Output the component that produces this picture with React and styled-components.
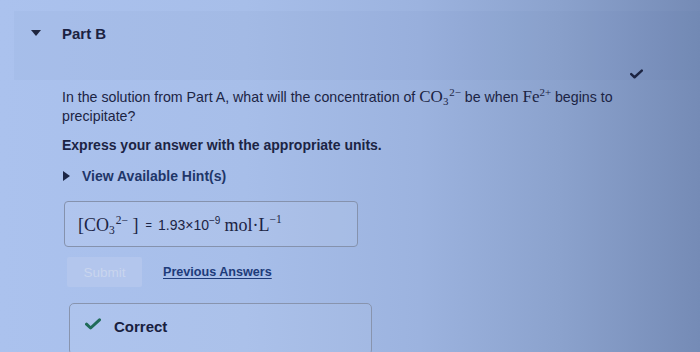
import React from 'react'
import styled, { createGlobalStyle } from 'styled-components'

const GlobalStyle = createGlobalStyle`
  html, body {
    margin: 0;
    padding: 0;
  }
  body {
    width: 700px;
    height: 352px;
    overflow: hidden;
    font-family: "Liberation Sans", Arial, sans-serif;
    color: #1c2444;
    background: linear-gradient(90deg, #abc2ee 0%, #a7bee9 35%, #9cb3df 60%, #8ba2cd 80%, #758bb6 100%);
  }
`

const Page = styled.div`
  position: relative;
  height: 352px;
  padding-left: 14px;
  box-sizing: border-box;
`

const Header = styled.div`
  margin-top: 11px;
  height: 69px;
  display: flex;
  align-items: flex-start;
  background: rgba(70, 95, 140, 0.035);
`

const Caret = styled.span`
  width: 0;
  height: 0;
  margin: 19px 0 0 17px;
  border-left: 5px solid transparent;
  border-right: 5px solid transparent;
  border-top: 6px solid #20273f;
`

const PartTitle = styled.h2`
  margin: 13px 0 0 21px;
  font-size: 15px;
  line-height: 20px;
  font-weight: bold;
  color: #1b2242;
`

const HeaderCheck = styled.svg`
  margin-left: auto;
  margin-right: 57px;
  align-self: flex-end;
  margin-bottom: 1px;
`

const Body = styled.div`
  padding-left: 48px;
  display: flex;
  flex-direction: column;
  align-items: flex-start;
`

const Question = styled.p`
  margin: 7px 0 0;
  width: 570px;
  font-size: 14.2px;
  line-height: 19px;
`

const Math = styled.span`
  font-family: "Liberation Serif", "Times New Roman", serif;
  font-size: ${p => p.size || 16}px;
`

const Sup = styled.sup`
  font-size: ${p => p.scale || 0.64}em;
  vertical-align: ${p => p.up || 0.55}em;
  line-height: 0;
  margin-left: ${p => p.gap || 0}px;
`

const Sub = styled.sub`
  font-size: 0.64em;
  vertical-align: -0.3em;
  line-height: 0;
`

const Instruction = styled.p`
  margin: 10px 0 0;
  font-size: 14px;
  line-height: 19px;
  font-weight: bold;
`

const HintRow = styled.div`
  margin-top: 11px;
  display: flex;
  align-items: center;
  gap: 12px;
  height: 19px;
`

const HintArrow = styled.span`
  width: 0;
  height: 0;
  margin-left: 1px;
  border-top: 5px solid transparent;
  border-bottom: 5px solid transparent;
  border-left: 7px solid #1c2646;
`

const HintLink = styled.span`
  font-size: 14px;
  font-weight: bold;
  color: #1f3669;
`

const AnswerBox = styled.div`
  margin: 16px 0 0 2px;
  width: 294px;
  height: 46px;
  box-sizing: border-box;
  border: 1px solid #8592ad;
  border-radius: 4px;
  background: rgba(255, 255, 255, 0.07);
  display: flex;
  align-items: center;
  padding: 2px 0 0 13px;
  white-space: nowrap;
`

const Equals = styled.span`
  font-size: 11px;
  margin: 0 6px 0 7px;
`

const Value = styled.span`
  font-size: 14px;
  margin-right: 4px;
`

const Actions = styled.div`
  margin: 10px 0 0 5px;
  display: flex;
  align-items: center;
  gap: 21px;
`

const SubmitButton = styled.button`
  width: 75px;
  height: 30px;
  border: none;
  border-radius: 2px;
  background: #b3c6ed;
  color: #c9d5ee;
  font-family: "Liberation Sans", Arial, sans-serif;
  font-size: 13.5px;
  padding: 0;
`

const PrevLink = styled.a`
  margin-top: 0;
  font-size: 12.6px;
  font-weight: bold;
  color: #1d3b7a;
  text-decoration: underline;
  text-underline-offset: 2px;
`

const Feedback = styled.div`
  margin: 16px 0 0 7px;
  width: 303px;
  height: 52px;
  box-sizing: border-box;
  border: 1px solid #8894ae;
  border-radius: 5px;
  background: rgba(255, 255, 255, 0.05);
  display: flex;
  align-items: flex-start;
  padding: 14px 0 0 15px;
  gap: 13px;
`

const FeedbackText = styled.span`
  font-size: 15px;
  font-weight: bold;
  line-height: 18px;
  color: #18203e;
`

const ScreenEdge = styled.div`
  position: absolute;
  left: 0;
  right: 0;
  bottom: 0;
  height: 4px;
  background: linear-gradient(90deg, #e4ebf8, #c9d4ea 70%, #b3c0da);
`

const Check = ({ color, w, h }) => (
  <svg width={w} height={h} viewBox="0 0 16 12">
    <path d="M1.5 6.2 L5.6 10 L14.5 1.8" fill="none" stroke={color} strokeWidth="3" strokeLinecap="round" strokeLinejoin="round" />
  </svg>
)

export default function App() {
  return (
    <>
      <GlobalStyle />
      <Page>
        <Header>
          <Caret />
          <PartTitle>Part B</PartTitle>
          <HeaderCheck width="13" height="10" viewBox="0 0 16 12">
            <path d="M1.5 6.2 L5.6 10 L14.5 1.8" fill="none" stroke="#1c2442" strokeWidth="3" strokeLinecap="round" strokeLinejoin="round" />
          </HeaderCheck>
        </Header>
        <Body>
          <Question>
            In the solution from Part A, what will the concentration of{' '}
            <Math size={17}>CO<Sub>3</Sub><Sup gap={1}>2−</Sup></Math>{'  '}be when{' '}
            <Math size={17}>Fe<Sup>2+</Sup></Math> begins to precipitate?
          </Question>
          <Instruction>Express your answer with the appropriate units.</Instruction>
          <HintRow>
            <HintArrow />
            <HintLink>View Available Hint(s)</HintLink>
          </HintRow>
          <AnswerBox>
            <Math size={18}>[CO<Sub>3</Sub><Sup gap={1}>2−</Sup>&nbsp;]</Math>
            <Equals>=</Equals>
            <Value>1.93×10<Sup up={0.6} scale={0.72}>−9</Sup></Value>
            <Math size={18}>mol·L<Sup up={0.7}>−1</Sup></Math>
          </AnswerBox>
          <Actions>
            <SubmitButton disabled>Submit</SubmitButton>
            <PrevLink>Previous Answers</PrevLink>
          </Actions>
          <Feedback>
            <Check color="#1f6b58" w={16} h={12} />
            <FeedbackText>Correct</FeedbackText>
          </Feedback>
        </Body>
        <ScreenEdge />
      </Page>
    </>
  )
}
